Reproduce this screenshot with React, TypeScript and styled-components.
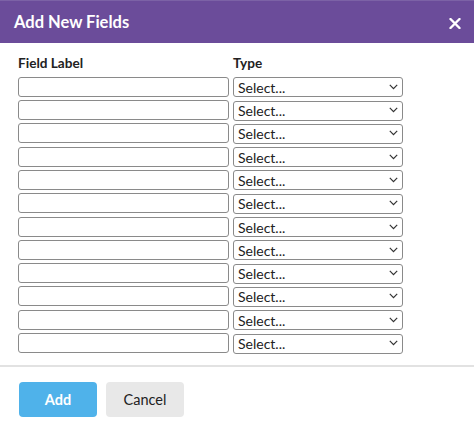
import * as React from 'react';
import styled, { createGlobalStyle } from 'styled-components';

const GlobalStyle = createGlobalStyle`
    html, body {
        margin: 0;
        padding: 0;
        background: #fff;
    }
    body {
        font-family: Lato, "Open Sans", sans-serif;
        color: #222;
    }
`;

const ROWS = 12;

const Dialog = styled.div`
    width: 474px;
    height: 432px;
    display: flex;
    flex-direction: column;
    background: #fff;
`;

const Header = styled.div`
    height: 45px;
    box-sizing: border-box;
    display: flex;
    align-items: center;
    justify-content: space-between;
    padding: 0 11px 0 14px;
    background: #6b4c9a;
    border-top: 1px solid #7c62a6;
`;

const Title = styled.h2`
    margin: 0;
    font-size: 16.5px;
    font-weight: 700;
    color: #fff;
`;

const CloseButton = styled.button`
    border: 0;
    background: none;
    padding: 0;
    width: 16px;
    height: 16px;
    margin-top: 3px;
    display: flex;
    align-items: center;
    justify-content: center;
    cursor: pointer;
`;

const Body = styled.div`
    padding: 12px 0 12px 18px;
    display: grid;
    grid-template-columns: 211px 170px;
    column-gap: 4px;
    row-gap: 3.3px;
    border-bottom: 2px solid #e2e2e2;
`;

const ColumnLabel = styled.div`
    font-size: 13.6px;
    font-weight: 700;
    line-height: 16px;
    margin-bottom: 2px;
`;

const TextInput = styled.input`
    box-sizing: border-box;
    height: 20px;
    width: 100%;
    margin: 0;
    border: 1px solid #8a8a8a;
    border-radius: 3px;
    background: #fff;
    font-family: inherit;
    font-size: 13px;
    padding: 0 4px;
`;

const SelectWrap = styled.div`
    position: relative;
    height: 20px;
`;

const Select = styled.select`
    box-sizing: border-box;
    appearance: none;
    height: 20px;
    width: 100%;
    margin: 0;
    border: 1px solid #8a8a8a;
    border-radius: 3px;
    background: #fff;
    font-family: Lato, "Open Sans", sans-serif;
    font-size: 14px;
    color: #222;
    padding: 0 20px 0 4px;
`;

const Chevron = styled.svg`
    position: absolute;
    right: 5px;
    top: 7px;
    pointer-events: none;
`;

const Footer = styled.div`
    display: flex;
    gap: 9px;
    padding: 15px 19px;
`;

const Button = styled.button<{ $primary?: boolean }>`
    width: 78px;
    height: 35px;
    border: 0;
    border-radius: 4px;
    font-family: Lato, "Open Sans", sans-serif;
    font-size: 14.5px;
    font-weight: ${p => (p.$primary ? 700 : 400)};
    color: ${p => (p.$primary ? '#fff' : '#222')};
    background: ${p => (p.$primary ? '#4fb2ea' : '#e8e8e8')};
    cursor: pointer;
`;

const App: React.FC = () => (
    <>
        <GlobalStyle />
        <Dialog>
            <Header>
                <Title>Add New Fields</Title>
                <CloseButton aria-label="Close">
                    <svg width="12" height="11" viewBox="0 0 12 11">
                        <path d="M1.5 1 L10.5 10 M10.5 1 L1.5 10" stroke="#fff" strokeWidth="2.4" strokeLinecap="round" />
                    </svg>
                </CloseButton>
            </Header>

            <Body>
                <ColumnLabel>Field Label</ColumnLabel>
                <ColumnLabel>Type</ColumnLabel>
                {Array.from({ length: ROWS }).map((_, index) => (
                    <React.Fragment key={index}>
                        <TextInput type="text" />
                        <SelectWrap>
                            <Select defaultValue="">
                                <option value="">Select...</option>
                            </Select>
                            <Chevron width="9" height="6" viewBox="0 0 9 6">
                                <path d="M0.8 0.8 L4.5 4.6 L8.2 0.8" fill="none" stroke="#333" strokeWidth="1.2" />
                            </Chevron>
                        </SelectWrap>
                    </React.Fragment>
                ))}
            </Body>

            <Footer>
                <Button $primary>Add</Button>
                <Button>Cancel</Button>
            </Footer>
        </Dialog>
    </>
);

export default App;
